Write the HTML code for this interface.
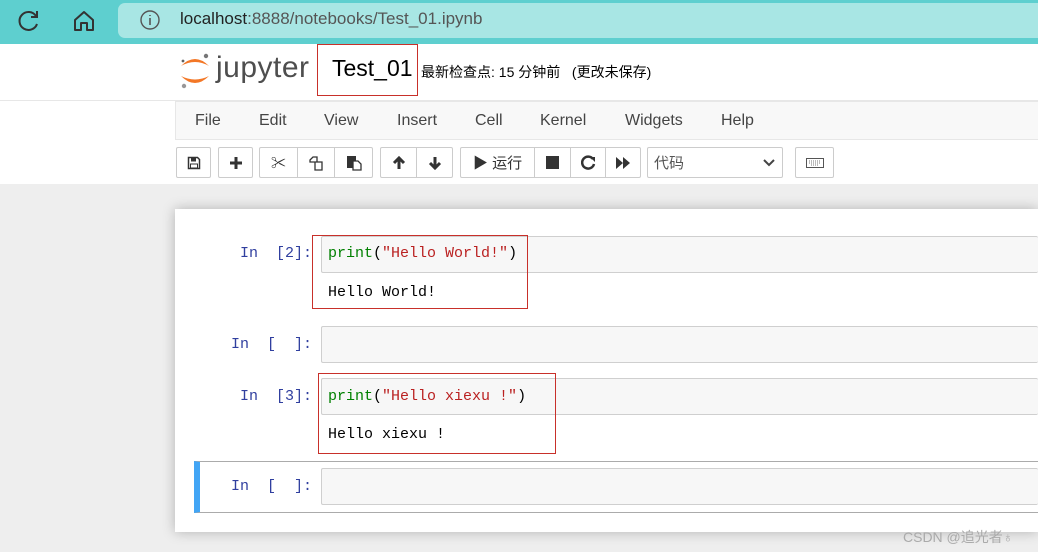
<!DOCTYPE html>
<html><head><meta charset="utf-8"><style>
*{margin:0;padding:0;box-sizing:border-box}
body{width:1038px;height:552px;overflow:hidden;background:#eeeeee;font-family:"Liberation Sans","Noto Sans CJK SC",sans-serif;position:relative}
.abs{position:absolute}
.mono{font-family:"Liberation Mono","Noto Sans CJK SC",monospace;font-size:15px}
.btn{position:absolute;top:147px;height:31px;border:1px solid #ccc;border-radius:2px;background:#fff;display:flex}
.btn span{display:flex;align-items:center;justify-content:center;border-right:1px solid #ccc;height:100%;color:#333;font-size:15px}
.btn span:last-child{border-right:none}
.menu{position:absolute;top:112px;font-size:16px;color:#444}
.inp{position:absolute;left:321px;right:0;height:37px;background:#f7f7f7;border:1px solid #cfcfcf;border-right:none;border-radius:2px}
.pr{position:absolute;color:#303f9f;font-family:"Liberation Mono",monospace;font-size:15px;text-align:right;width:140px}
.red{position:absolute;border:1px solid #c8302a;z-index:5}
</style></head><body>
<div class="abs" style="left:0;top:0;width:1038px;height:44px;background:#5ecfcf"></div>
<div class="abs" style="left:118px;top:3px;width:930px;height:35px;background:#a8e6e4;border-radius:7px"></div>
<svg class="abs" style="left:16px;top:8px" width="26" height="26" viewBox="0 0 26 26"><path d="M20 8 A9 9 0 1 0 21 16" fill="none" stroke="#333" stroke-width="2"/><path d="M21 3v6h-6" fill="none" stroke="#333" stroke-width="2"/></svg>
<svg class="abs" style="left:71px;top:8px" width="26" height="26" viewBox="0 0 26 26"><path d="M4 12 L13 4 L22 12 V22 H16 V15 H10 V22 H4 Z" fill="none" stroke="#333" stroke-width="2" stroke-linejoin="round"/></svg>
<svg class="abs" style="left:139px;top:9px" width="22" height="22" viewBox="0 0 22 22"><circle cx="11" cy="11" r="9" fill="none" stroke="#555" stroke-width="1.4"/><path d="M11 9v7M11 6v1" stroke="#555" stroke-width="1.6"/></svg>
<div class="abs" style="left:180px;top:9px;font-size:17px;color:#222">localhost<span style="color:#555">:8888/notebooks/Test_01.ipynb</span></div>
<div class="abs" style="left:0;top:44px;width:1038px;height:140px;background:#fff"></div>
<div class="abs" style="left:0;top:100px;width:1038px;height:1px;background:#e7e7e7"></div>
<svg class="abs" style="left:178px;top:50px" width="34" height="40" viewBox="0 0 34 40"><path d="M3 16 Q17 2 31 16 Q17 8 3 16Z" fill="#f37726"/><path d="M3 26 Q17 40 31 26 Q17 33 3 26Z" fill="#f37726"/><circle cx="28" cy="6" r="2.2" fill="#767677"/><circle cx="5" cy="11" r="1.4" fill="#616262"/><circle cx="6" cy="36" r="2.2" fill="#989798"/></svg>
<div class="abs" style="left:216px;top:51px;font-size:30px;color:#4e4e4e;letter-spacing:0.5px">jupyter</div>
<div class="red" style="left:317px;top:44px;width:101px;height:52px"></div>
<div class="abs" style="left:332px;top:55px;font-size:23px;color:#000">Test_01</div>
<div class="abs" style="left:421px;top:62px;font-size:14px;color:#000">最新检查点: 15 分钟前 &nbsp;&nbsp;(更改未保存)</div>
<div class="abs" style="left:175px;top:101px;width:863px;height:39px;background:#f8f8f8;border:1px solid #e7e7e7;border-right:none"></div>
<div class="menu" style="left:195px">File</div><div class="menu" style="left:259px">Edit</div><div class="menu" style="left:324px">View</div><div class="menu" style="left:397px">Insert</div><div class="menu" style="left:475px">Cell</div><div class="menu" style="left:540px">Kernel</div><div class="menu" style="left:625px">Widgets</div><div class="menu" style="left:721px">Help</div>
<div class="btn" style="left:176px;width:35px"><span style="width:33px"><svg width="14" height="14" viewBox="0 0 14 14"><path d="M1.5 1.5h9l2 2v9h-11z" fill="none" stroke="#333" stroke-width="1.5"/><rect x="4" y="2" width="5" height="3.5" fill="#333"/><rect x="3.5" y="8" width="7" height="4" fill="none" stroke="#333"/></svg></span></div>
<div class="btn" style="left:218px;width:35px"><span style="width:33px"><svg width="14" height="14" viewBox="0 0 14 14"><path d="M7 1v12M1 7h12" stroke="#333" stroke-width="3"/></svg></span></div>
<div class="btn" style="left:259px;width:114px"><span style="width:38px">✂</span><span style="width:37px"><svg width="16" height="16" viewBox="0 0 16 16"><path d="M2 5l3-3h4v5H2z M7 7h7v8H7z" fill="none" stroke="#333" stroke-width="1.3"/></svg></span><span style="width:37px"><svg width="16" height="16" viewBox="0 0 16 16"><rect x="1" y="1" width="9" height="12" fill="#333"/><path d="M7 6h5l3 3v6H7z" fill="#fff" stroke="#333" stroke-width="1.3"/></svg></span></div>
<div class="btn" style="left:380px;width:73px"><span style="width:36px"><svg width="14" height="14" viewBox="0 0 14 14"><path d="M7 13V3M2 7l5-5 5 5" fill="none" stroke="#333" stroke-width="3"/></svg></span><span style="width:35px"><svg width="14" height="14" viewBox="0 0 14 14"><path d="M7 1v10M2 7l5 5 5-5" fill="none" stroke="#333" stroke-width="3"/></svg></span></div>
<div class="btn" style="left:460px;width:181px"><span style="width:74px">▶ 运行</span><span style="width:36px"><svg width="13" height="13"><rect width="13" height="13" fill="#333"/></svg></span><span style="width:35px"><svg width="15" height="15" viewBox="0 0 15 15"><path d="M12 4A6 6 0 1 0 13 9" fill="none" stroke="#333" stroke-width="2.5"/><path d="M9 2h5v5z" fill="#333"/></svg></span><span style="width:34px"><svg width="16" height="14" viewBox="0 0 16 14"><path d="M1 1l7 6-7 6zM8 1l7 6-7 6z" fill="#333"/></svg></span></div>
<div class="btn" style="left:647px;width:136px;padding-left:6px;justify-content:space-between;align-items:center;color:#555;font-size:15px">代码<span style="border:none;width:26px"><svg width="12" height="8" viewBox="0 0 12 8"><path d="M1 1l5 5 5-5" fill="none" stroke="#444" stroke-width="2"/></svg></span></div>
<div class="btn" style="left:795px;width:39px"><span style="width:37px"><svg width="18" height="10" viewBox="0 0 18 10"><rect x=".5" y=".5" width="17" height="9" fill="none" stroke="#555"/><path d="M3 3h12M3 5h12M5 7h8" stroke="#777" stroke-dasharray="1 1"/></svg></span></div>
<div class="abs" style="left:175px;top:209px;width:863px;height:323px;background:#fff;box-shadow:0 0 12px rgba(0,0,0,.25)"></div>
<div class="pr" style="left:172px;top:245px">In&nbsp; [2]:</div>
<div class="inp" style="top:236px"></div>
<div class="abs mono" style="left:328px;top:245px"><span style="color:#008000">print</span>(<span style="color:#ba2121">"Hello World!"</span>)</div>
<div class="abs mono" style="left:328px;top:284px;color:#000">Hello World!</div>
<div class="red" style="left:312px;top:235px;width:216px;height:74px"></div>
<div class="pr" style="left:172px;top:336px">In&nbsp; [&nbsp; ]:</div>
<div class="inp" style="top:326px"></div>
<div class="pr" style="left:172px;top:388px">In&nbsp; [3]:</div>
<div class="inp" style="top:378px"></div>
<div class="abs mono" style="left:328px;top:388px"><span style="color:#008000">print</span>(<span style="color:#ba2121">"Hello xiexu !"</span>)</div>
<div class="abs mono" style="left:328px;top:426px;color:#000">Hello xiexu !</div>
<div class="red" style="left:318px;top:373px;width:238px;height:81px"></div>
<div class="abs" style="left:194px;top:461px;width:844px;height:52px;border:1px solid #ababab;border-right:none;border-left:6px solid #42a5f5"></div>
<div class="pr" style="left:172px;top:478px">In&nbsp; [&nbsp; ]:</div>
<div class="inp" style="top:468px"></div>
<div class="abs" style="left:903px;top:527px;font-size:14px;color:#aaa">CSDN @追光者♁</div>
</body></html>
